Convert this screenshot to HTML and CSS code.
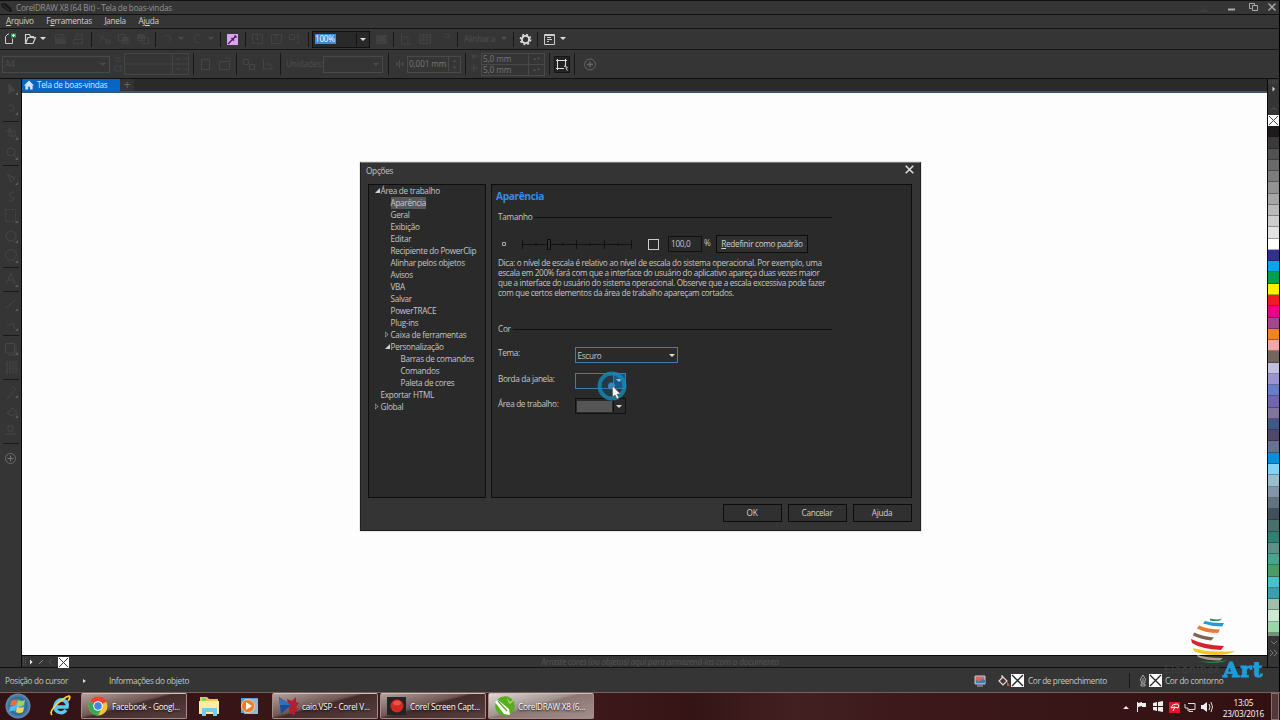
FILE: index.html
```html
<!DOCTYPE html>
<html lang="pt-BR">
<head>
<meta charset="utf-8">
<title>CorelDRAW X8</title>
<link rel="stylesheet" href="styles.css">
</head>
<body>
<div class="desktop">
<header class="titlebar">
  <svg class="icon" width="15" height="13" viewBox="0 0 15 13"><path d="M1 3l4-1 6 5 1 4-4-1-6-4z" fill="#151515"/><path d="M3 4l6 5" stroke="#3b3b3b"/></svg>
  <span class="app-title">CorelDRAW X8 (64 Bit) - Tela de boas-vindas</span>
  <svg class="window-buttons" width="80" height="13" viewBox="0 0 80 13" fill="none" stroke="#aaa"><path d="M0 10h9M5 6v4" stroke="#444"/><path d="M29 8.500h7" stroke-width="2"/><path d="M52.500 7.500h-2v-5h5v2M53.500 4.500h5v5h-5z"/><path d="M69.500 2.500l7 7m0-7l-7 7" stroke-width="1.400"/></svg>
</header>
<nav class="menubar"><span><u>A</u>rquivo</span><span>F<u>e</u>rramentas</span><span><u>J</u>anela</span><span>Aj<u>u</u>da</span></nav>
<div class="toolbar">
  <svg width="312" height="20" viewBox="0 0 312 20" fill="none">
    <path d="M9 5H8L5.500 7.500v7h7v-5" stroke="#ccc"/><path d="M11 4.500h5v4h-5z" fill="#2fa45c"/><path d="M13.500 5v3M12 6.500h3" stroke="#d0f5dc"/>
    <path d="M25.500 14.500v-9h4l1 2h3v2M25.500 14.500l2.500-6h7.500l-2.500 6z" stroke="#d2d2d2" stroke-width="1.200"/><path d="M40 8h6l-3 3z" fill="#ddd"/>
    <g stroke="#424242"><path d="M55.500 5.500h8l2 2v7h-10zM57 9h6v-3M58 14v-3h5v3M73.500 10.500h9v4h-9zM75 10l2-5h5v5M98 6l9 6m-8 1l5-7m2 5h4v3h-4zM118.500 5.500h7v6h-7zM122.500 8.500h7v6h-7zM137.500 5.500h7v6h-7zM141.500 8.500h7v6h-7zM163 8q5-4 7 0t-2 5M200 6q-6-1-6 4t5 3"/><path d="M252.500 5.500h10v9h-10zM257 4v7m-2-2l2 2 2-2M271.500 5.500h10v9h-10zM276 12V5m-2 2l2-2 2 2M289.500 5.500h5v5h-5zM294 8h5v6h-4M298 4v4"/></g>
    <path d="M178 8h6l-3 3zM208 8h6l-3 3z" fill="#4c4c4c"/><path d="M56 10h9v4h-9zM138 6h6v4h-6zM122 9h6v4h-6z" fill="#404040"/>
    <path d="M227 5h11v11h-11z" fill="#dba2f3"/><path d="M228 15l8-8" stroke="#432052" stroke-width="1.300"/><path d="M231.500 9l2.500 2.500M234.500 6.500l2 2" stroke="#432052" stroke-width="1.500"/>
    <path d="M91.500 3v15M155.500 3v15M220.500 3v15M245.500 3v15M308.500 3v15" stroke="#171717"/>
  </svg>
  <div class="zoom-box"><b>100%</b><i></i></div>
  <svg width="94" height="20" viewBox="370 0 94 20" fill="none" stroke="#424242"><path d="M376.500 6.500h10v8h-10zm0 0l10 8m0-8l-10 8M401.500 4v11h10M401 8h7v7M419.500 5.500h11v9h-11zM419 8h12M419 11h12M423 5v10M427 5v10M444 5h5v3h-5"/><path d="M378 7h7v6h-7z" fill="#424242"/><path d="M393.500 3v15M457.500 3v15" stroke="#171717"/></svg>
  <span class="align-label">Alinhar a</span>
  <svg width="75" height="20" viewBox="496 0 75 20" fill="none"><path d="M501 8h6l-3 3z" fill="#505050"/><path d="M513.500 3v15M537.500 3v15" stroke="#171717"/><circle cx="525.500" cy="10.500" r="3.600" stroke="#ddd" stroke-width="1.900"/><circle cx="525.500" cy="10.500" r="5.100" stroke="#ddd" stroke-width="1.500" stroke-dasharray="2 2"/><path d="M544.500 5.500h10v10h-10zM544 6.500h11M547 8.500h4M547 10.500h5M547 12.500h2" stroke="#ccc"/><path d="M560 8h6l-3 3z" fill="#ddd"/></svg>
</div>
<div class="propbar">
  <div class="dim-box paper"><span>A4</span><i></i></div>
  <svg class="fill-h" width="180" height="28" viewBox="110 0 180 28" fill="none" stroke="#454545"><path d="M115 8h6M115 11h6M115 16h6v5h-6zM124.500 3.500h64v21h-64zM124 14h64M172.500 4v20M175 9h5m3 0h5M175 19h5m3 0h5M201.500 9.500h8v10h-8zM219.500 11.500h10v8h-10zM225 8h5v3M243.500 9.500h5v5h-5zM249.500 14.500h5v5h-5zM263.500 9v10h10M266 14h5v5"/><path d="M193.500 3v22M236.500 3v22M280.500 3v22" stroke="#171717"/></svg>
  <span class="dim-label">Unidades:</span><div class="dim-box units"><i></i></div>
  <svg width="24" height="28" viewBox="383 0 24 28" fill="none"><path d="M388.500 3v22" stroke="#171717"/><path d="M399.500 10v8M396 14h8m-6-2l-2 2 2 2m4-4l2 2-2 2" stroke="#4c4c4c"/></svg>
  <div class="dim-box nudge"><span>0,001 mm</span><em>▴<br>▾</em></div>
  <svg width="20" height="28" viewBox="461 0 20 28" fill="none"><path d="M465.500 3v22" stroke="#171717"/><path d="M471 6h7m-5-2v5m-2 9h7m-4-4v8" stroke="#484848"/></svg>
  <div class="duplicate"><div><span>5,0 mm</span><em>▴ ▾</em></div><div><span>5,0 mm</span><em>▴ ▾</em></div></div>
  <svg width="60" height="28" viewBox="545 0 60 28" fill="none"><path d="M549.500 3v22M574.500 3v22" stroke="#171717"/><path d="M554.500 6.500h15v16h-15z" fill="#242424" stroke="#141414"/><path d="M556 10.500h11M556 18.500h8M557.500 9v11M565.500 9v7" stroke="#ddd"/><path d="M564 16l3.500 1.500-1.500 1 1.500 2" stroke="#ddd"/><circle cx="590" cy="14.500" r="5.500" stroke="#666"/><path d="M587 14.500h6m-3-3v6" stroke="#666" stroke-width="1.400"/></svg>
</div>
<div class="middle">
  <aside class="toolbox">
    <svg width="21" height="588" viewBox="0 79 21 588" fill="none" stroke="#464646">
      <path d="M9 84l6 7h-4l-2 3z" fill="#464646"/><path d="M8 106q5-3 6 2t-5 2M6 131h9v5M9 128v8h8M10 127l3 11"/><circle cx="11" cy="152" r="4"/><path d="M14 155l3 4M8 175l7 3-4 4zM8 173v3M14 192q-7 1-4 4t4 2q-1 5-5 2"/><path d="M5.500 209.500h10v12h-10z" stroke-dasharray="2 1"/><circle cx="11" cy="236" r="5"/><path d="M8 250h6l3 5-3 5H8l-3-5zM6 284l5-11 4 11M8 280h5M6 308l4-3 5-5M7 326l6-3 2 6M5.500 343.500h9V353h-9zM8 355h8v-9"/>
      <path d="M6 363h11m-11 3h11m-11 3h11m-11 3h11M7 361v13m3-13v13m3-13v13M16 361v13" stroke-dasharray="2 1"/><path d="M7 399l7-8M13 387l3 3M7 413l6-5 4 5-5 3zM5 434h11M8 426h5v5H8z"/><path d="M3 121.500h16M3 165.500h16M3 267.500h16M3 291.500h16M3 335.500h16M3 379.500h16M3 443.500h16" stroke="#181818"/>
      <g fill="#606060" stroke="none"><path d="M18 92v3h-3zM18 112v3h-3zM18 137v3h-3zM18 157v3h-3zM18 182v3h-3zM18 220v3h-3zM18 240v3h-3zM18 260v3h-3zM18 284v3h-3zM18 308v3h-3zM18 328v3h-3zM18 352v3h-3zM18 395v3h-3zM18 415v3h-3z"/></g>
      <circle cx="10.500" cy="458.500" r="5" stroke="#6b6b6b"/><path d="M7.500 458.500h6m-3-3v6" stroke="#777"/>
    </svg>
  </aside>
  <section class="workspace">
    <div class="tabs"><div class="tab"><svg width="10" height="10" viewBox="0 0 11 10"><path d="M0 5.500L5.500 0 11 5.500H9.500V10h-3V7h-2v3h-3V5.500z" fill="#d4e4f8"/></svg><span>Tela de boas-vindas</span></div><div class="add-tab">+</div></div>
    <main class="canvas"></main>
    <div class="doc-palette"><svg width="48" height="12" viewBox="0 0 48 12"><path d="M1.500 2v8M3.500 2v8" stroke="#555" stroke-dasharray="1 1"/><path d="M8 3.500l2.500 2.500L8 8.500z" fill="#eee"/><path d="M17 8l4-4" stroke="#888"/><path d="M30 3l-3 3 3 3" fill="none" stroke="#555"/><path d="M36 1h11v11H36z" fill="#fff"/><path d="M37 2l9 9m0-9l-9 9" stroke="#333"/></svg><em>Arraste cores (ou objetos) aqui para armazená-las com o documento</em></div>
  </section>
  <aside class="palette">
    <svg width="11" height="36" viewBox="0 0 11 36"><path d="M0 2h10M0 4h10" stroke="#555" stroke-dasharray="1 1"/><path d="M4.500 7.500L7 10l-2.500 2.500z" fill="#ddd"/><path d="M3 31l3-2 3 2" fill="none" stroke="#555"/></svg>
    <svg width="11" height="11" viewBox="0 0 11 11"><path d="M0 0h11v11H0z" fill="#fff"/><path d="M1 1l9 9m0-9l-9 9" stroke="#444"/></svg>
    <i style="background:#1d1b1c"></i><i style="background:#3a3a3a"></i><i style="background:#525252"></i><i style="background:#6a6a6a"></i><i style="background:#7c7c7c"></i><i style="background:#929292"></i><i style="background:#a6a6a6"></i><i style="background:#b9b9b9"></i><i style="background:#cccccc"></i><i style="background:#e2e2e2"></i><i style="background:#ffffff"></i><i style="background:#2e3192"></i><i style="background:#00a9ec"></i><i style="background:#00a14d"></i><i style="background:#fff200"></i><i style="background:#ed1c24"></i><i style="background:#ec008c"></i><i style="background:#a2488e"></i><i style="background:#f58220"></i><i style="background:#f3a6a7"></i><i style="background:#73665c"></i><i style="background:#c1c0e0"></i><i style="background:#9b94ce"></i><i style="background:#647fc5"></i><i style="background:#7165ae"></i><i style="background:#81759f"></i><i style="background:#3e5989"></i><i style="background:#514869"></i><i style="background:#657292"></i><i style="background:#0091dc"></i><i style="background:#80d4fa"></i><i style="background:#99bdcc"></i><i style="background:#8495a8"></i><i style="background:#607480"></i><i style="background:#40505d"></i><i style="background:#476f6c"></i><i style="background:#317f73"></i><i style="background:#5c918a"></i><i style="background:#48a58d"></i><i style="background:#4c9b67"></i><i style="background:#48c2cc"></i><i style="background:#379faf"></i><i style="background:#a0beaa"></i><i style="background:#c9e9d2"></i><i style="background:#99d5ab"></i>
    <svg class="palette-end" width="11" height="28" viewBox="0 0 11 28"><path d="M0 0h11v3H0z" fill="#71927d"/><path d="M3 8l3 3 3-3M2 17l3 3-3 3m4-6l3 3-3 3" fill="none" stroke="#777"/></svg>
  </aside>
</div>
<footer class="status">
  <span class="cursor-pos">Posição do cursor</span><i></i><span class="info">Informações do objeto</span>
  <svg class="monitor" width="12" height="12" viewBox="0 0 12 12"><path d="M1 1h10v8H1z" fill="#db665e" stroke="#b9d0e4"/><path d="M2 5l3 2 3-3 3 1v3H2z" fill="#387db6"/><path d="M3 11h6" stroke="#9fb8d2"/></svg>
  <svg class="fill-icon" width="27" height="14" viewBox="0 0 27 14"><path d="M1 7l4-4 4 4-4 4zM4 5V1" stroke="#ddd" fill="#483232" stroke-width="1.200"/><path d="M9 7l3 5H9z" fill="#bd5a4a"/><path d="M13 0h13v13H13z" fill="#fff"/><path d="M14 1l11 11m0-11L14 12" stroke="#252525" stroke-width="1.300"/></svg><span class="fill-label">Cor de preenchimento</span>
  <svg class="outline-icon" width="35" height="16" viewBox="0 0 35 16"><path d="M2.500 0v15" stroke="#171717"/><path d="M16 2l2.500 4-1 4h-3l-1-4zm-2 9h4v2h-4zM16 5v4" fill="none" stroke="#aaa"/><path d="M22 1h13v13H22z" fill="#fff"/><path d="M23 2l11 11m0-11L23 13" stroke="#252525" stroke-width="1.300"/></svg><span class="outline-label">Cor do contorno</span>
</footer>
<div class="taskbar">
  <svg class="start" width="26" height="26" viewBox="0 0 26 26"><defs><radialGradient id="orb"><stop offset="0" stop-color="#79cdec"/><stop offset=".65" stop-color="#276b9c"/><stop offset="1" stop-color="#718caa"/></radialGradient></defs><circle cx="13" cy="13" r="12.500" fill="url(#orb)"/><path d="M6 8q3-2 6-1l-1 5q-3-1-6 1z" fill="#f46b31"/><path d="M13 7q3 2 7 0l-1 5q-4 2-7 0z" fill="#9bd452"/><path d="M5 14q3-2 6-1l-1 5q-3-1-6 1z" fill="#54b8ed"/><path d="M12 14q3 2 7 0l-1 5q-4 2-7 0z" fill="#ffd550"/></svg>
  <svg class="ie" width="22" height="22" viewBox="0 0 22 22" fill="none"><path d="M17 15q-3 4-8 2-5-3-2-9 4-5 9-2 3 2 2 6H7" stroke="#5bcaf2" stroke-width="3.500"/><path d="M3 20q-3-3 4-10T20 1q2 1-1 5" stroke="#ffd149" stroke-width="1.700"/></svg>
  <div class="task chrome"><svg width="20" height="20" viewBox="0 0 20 20"><circle cx="10" cy="10" r="9.500" fill="#f2c62d"/><path d="M10 10L2 5Q5 0 10 .500q6 0 9 5z" fill="#e94335"/><path d="M10 10l-8-5Q-1 10 2 15t8 4.500l4-8z" fill="#38a853"/><circle cx="10" cy="10" r="4.800" fill="#fff"/><circle cx="10" cy="10" r="3.800" fill="#4384e9"/></svg><span>Facebook - Googl...</span></div>
  <svg class="explorer" width="23" height="21" viewBox="0 0 23 21"><path d="M2 1h7l2 2h9v15H2z" fill="#e8c565"/><path d="M1 5h20v13H1z" fill="#ffeaa2"/><path d="M4 2h4v3H4z" fill="#8fcf63"/><path d="M4 20v-8h15v8h-4v-4H8v4z" fill="#78cbe8"/></svg>
  <svg class="player" width="20" height="20" viewBox="0 0 20 20"><path d="M1 2h17v15H1z" fill="#5ca0ce"/><path d="M4 3h14v15H4z" fill="#8ebbd3"/><circle cx="8" cy="10" r="6.500" fill="#ee7b25" stroke="#f8c8a1"/><path d="M6 6l6 4-6 4z" fill="#fff"/></svg>
  <div class="task video"><svg width="22" height="22" viewBox="0 0 22 22"><path d="M9 4l5 2 4-4v5l3 1-3 4 2 2-3 2v4l-5-1z" fill="#b41f2d"/><path d="M1 2l12 8L3 19z" fill="#174d99"/><path d="M1 2l12 8H2z" fill="#3272ba"/></svg><span>caio.VSP - Corel V...</span></div>
  <div class="task capture"><svg width="20" height="20" viewBox="0 0 20 20"><path d="M0 1h19v18H0z" fill="#242424"/><circle cx="10" cy="10" r="6.500" fill="#d32923"/><ellipse cx="10" cy="7" rx="4" ry="2.500" fill="#e85348"/></svg><span>Corel Screen Capt...</span></div>
  <div class="task corel"><svg width="20" height="20" viewBox="0 0 20 20"><circle cx="10" cy="10" r="9.800" fill="#59ad20"/><path d="M0 6l3-2 11 9 1 6-6-1z" fill="#fff"/><path d="M3 5l9 10" stroke="#59ad20" stroke-width="1.300"/><path d="M12 2q1 5 3 6 3-2 4-5l-4 3z" fill="#a7d46b"/></svg><span>CorelDRAW X8 (6...</span></div>
  <svg class="tray" width="92" height="14" viewBox="0 0 92 14" fill="#eee"><path d="M0 9l3-3 3 3zM14 2h1v10h-1zM15 3l4-1v1h4v4h-4v-1l-4 1zM30 3l4-1v4h-4zm5-1l5-1v5h-5zM30 7h4v4l-4-1zm5 0h5v5l-5-1z"/><path d="M46 2h11v11H46z" fill="#dc1927"/><path d="M48 8q1-4 5-4t2 4q-4-2-7 0m4-1l-2 4" stroke="#fff" fill="none"/><path d="M65 3.500h7v6h-6v2h4M62 4v4h3v3" stroke="#ddd" fill="none"/><path d="M78 5h2l4-3v10l-4-3h-2z"/><path d="M86 4q2 3 0 6m2-8q3 5 0 10" stroke="#ddd" fill="none"/></svg>
  <div class="clock">13:05<br>23/03/2016</div><div class="show-desktop"></div>
</div>
<div class="watermark"><svg width="46" height="46" viewBox="0 0 46 46"><path d="M20 1.500q7 2 12 0l-2 2q-5 1-10 0z" fill="#239252"/><path d="M15 4q8 2.500 19 2l-2 3.500q-10 0-19-3z" fill="#1e9cda"/><path d="M9 8.500q9 4 21 4l-2 3.500q-12 0-21-4.500z" fill="#ec7a2f"/><path d="M4 15.500q9 4 20 5l-3 3q-10-1-18-5z" fill="#7a6555"/><path d="M1 22q12 6 33 7l-3 4q-20-1-29-7z" fill="#db202d"/><path d="M3 31q15 5 42 3-5 4-20 4-13 0-21-4z" fill="#f2c622"/><path d="M7 38q10 3 26 3l-3 2.500q-14 0-22-3.500z" fill="#aaa18d"/><path d="M10 44q10 2 28-1-7 3.500-15 3-8 0-13-2z" fill="#28804a"/></svg><div class="brand"><span>Eleonlber</span><b>Art</b></div></div>
<div class="dialog">
  <div class="dialog-title"><span>Opções</span><svg width="9" height="9" viewBox="0 0 9 9"><path d="M.7.7l7.600 7.600m0-7.600L.7 8.300" stroke="#ddd" stroke-width="1.600"/></svg></div>
  <div class="dialog-body">
    <ul class="tree">
      <li class="open"><span>Área de trabalho</span></li><li class="l1 selected"><span>Aparência</span></li><li class="l1"><span>Geral</span></li><li class="l1"><span>Exibição</span></li><li class="l1"><span>Editar</span></li><li class="l1"><span>Recipiente do PowerClip</span></li><li class="l1"><span>Alinhar pelos objetos</span></li><li class="l1"><span>Avisos</span></li><li class="l1"><span>VBA</span></li><li class="l1"><span>Salvar</span></li><li class="l1"><span>PowerTRACE</span></li><li class="l1"><span>Plug-ins</span></li><li class="l1 closed"><span>Caixa de ferramentas</span></li><li class="l1 open"><span>Personalização</span></li><li class="l2"><span>Barras de comandos</span></li><li class="l2"><span>Comandos</span></li><li class="l2"><span>Paleta de cores</span></li><li><span>Exportar HTML</span></li><li class="closed"><span>Global</span></li>
    </ul>
    <section class="panel">
      <h2>Aparência</h2>
      <div class="section-head">Tamanho</div>
      <div class="scale-row">
        <svg width="150" height="18" viewBox="0 0 150 18" fill="none"><path d="M4.500 7.500h3v3h-3z" stroke="#aaa"/><path d="M24 9.500h110M24.500 5v9M51.500 5v9M78.500 5v9M106.500 5v9M133.500 5v9M38 8v3M65 8v3M92 8v3M120 8v3" stroke="#111"/><path d="M49.500 4.500h3v10h-3z" fill="#303030" stroke="#0a0a0a"/></svg>
        <i class="checkbox"></i><div class="number">100,0</div><span class="percent">%</span><button class="button reset"><span><u>R</u>edefinir como padrão</span></button>
      </div>
      <p>Dica: o nível de escala é relativo ao nível de escala do sistema operacional. Por exemplo, uma<br>escala em 200% fará com que a interface do usuário do aplicativo apareça duas vezes maior<br>que a interface do usuário do sistema operacional. Observe que a escala excessiva pode fazer<br>com que certos elementos da área de trabalho apareçam cortados.</p>
      <div class="section-head color-head">Cor</div>
      <div class="field"><label>Tema:</label><div class="select theme"><span>Escuro</span><i></i></div></div>
      <div class="field"><label>Borda da janela:</label><div class="select border-color"><i></i></div></div>
      <div class="field"><label>Área de trabalho:</label><div class="select area-color"><b></b><i></i></div></div>
    </section>
  </div>
  <div class="actions"><button class="button">OK</button><button class="button">Cancelar</button><button class="button">Ajuda</button></div>
</div>
<svg class="pointer" width="32" height="34" viewBox="0 0 32 34"><circle cx="15" cy="15" r="12.500" fill="#176393" fill-opacity=".25" stroke="#158bb8" stroke-width="4" stroke-opacity=".8"/><circle cx="14.500" cy="15" r="3.500" fill="#3a86bc"/><path d="M15.500 15v11l2.500-2 2 4 2-1-2-4h3.500z" fill="#fff" stroke="#444" stroke-width=".5"/></svg>
</div>
</body>
</html>
```

FILE: styles.css
```css
* { box-sizing: border-box; }
body { margin: 0; font: 8.200px/12px "Open Sans", "Noto Sans", sans-serif; letter-spacing: -.29px; color: #c6c6c6; }
svg { display: block; flex: none; }
button { font: inherit; color: inherit; letter-spacing: inherit; }
.desktop { position: relative; width: 1280px; height: 720px; overflow: hidden; display: flex; flex-direction: column; background: #353535; white-space: nowrap; }
.titlebar, .menubar, .toolbar, .propbar, .status { display: flex; align-items: center; flex: none; border-right: 1px solid #000; }
.titlebar { height: 15px; border-top: 1px solid #111; border-bottom: 1px solid #111; color: #929292; }
.app-title { margin-left: 1px; margin-top: 0; letter-spacing: -.24px; }
.window-buttons { margin-left: auto; margin-right: 0; }
.menubar { height: 14px; border-bottom: 1px solid #151515; padding-left: 6px; gap: 12.700px; color: #d0d0d0; }
.menubar span { margin-top: -1px; }
.menubar u, .reset u { text-underline-offset: 1px; }
.toolbar { height: 21px; border-bottom: 1px solid #151515; }
.zoom-box { width: 58px; height: 17px; padding: 1px; border: 1px solid #111; background: #292929; display: flex; align-items: center; }
.zoom-box b { height: 10px; line-height: 10px; width: 21px; margin-left: 1px; background: #3d8cd8; color: #fff; font-weight: 400; }
.zoom-box i, .select i, .dim-box > i { margin-left: auto; align-self: stretch; width: 12px; display: flex; align-items: center; justify-content: center; }
.zoom-box i { border-left: 1px solid #111; }
.zoom-box i::after, .select i::after, .dim-box > i::after { content: ""; border: 3px solid transparent; border-top-color: #ddd; border-bottom: 0; }
.align-label { width: 32px; color: #505050; }
.propbar { height: 29px; border-bottom: 1px solid #111; color: #505050; }
.dim-box { display: flex; align-items: center; height: 17px; border: 1px solid #494949; }
.dim-box > i::after { border-top-color: #4d4d4d; }
.paper { width: 108px; margin-left: 2px; padding-left: 2px; }
.fill-h { margin-right: -4px; }
.dim-label { width: 37px; letter-spacing: -.1px; }
.units { width: 60px; }
.nudge { width: 54px; padding-left: 1px; color: #777; letter-spacing: -.1px; }
.nudge em { margin-left: auto; width: 12px; border-left: 1px solid #494949; text-align: center; font: 5px/7px "DejaVu Sans"; color: #555; }
.duplicate { width: 64px; border: 1px solid #494949; color: #777; letter-spacing: -.1px; }
.duplicate div { height: 10px; line-height: 10px; display: flex; padding-left: 1px; }
.duplicate div + div { height: 11px; border-top: 1px solid #494949; }
.duplicate em { margin-left: auto; width: 16px; border-left: 1px solid #494949; font: 5px/9px "DejaVu Sans"; text-align: center; color: #555; }
.middle { height: 589px; display: flex; flex: none; }
.toolbox { width: 22px; border-right: 1px solid #0b0b0b; border-bottom: 1px solid #111; }
.workspace { width: 1245px; display: flex; flex-direction: column; }
.tabs { height: 14px; display: flex; border-bottom: 2px solid #40546a; background: #2a2a2a; }
.tab { width: 98px; height: 12px; padding-left: 2px; gap: 3px; background: #0665c7; display: flex; align-items: center; color: #d9e9ff; letter-spacing: -.25px; }
.add-tab { width: 14px; height: 12px; background: #343434; text-align: center; font: 12px/12px "Open Sans"; color: #666; }
.canvas { height: 562px; background: #fdfdfd; }
.doc-palette { height: 13px; border-top: 1px solid #090909; border-bottom: 1px solid #111; display: flex; align-items: center; color: #555; }
.doc-palette em { margin: 0 auto; padding-right: 17px; letter-spacing: -.17px; }
.palette { width: 13px; border-left: 1px solid #080808; border-right: 1px solid #000; border-bottom: 1px solid #111; }
.palette i { display: block; height: 11.280px; border-bottom: 1px solid rgba(20, 20, 20, .35); }
.status { height: 24px; padding-left: 5px; padding-top: 1px; color: #c5c5c5; }
.cursor-pos { width: 78px; }
.status i { border: 2.500px solid transparent; border-left: 3px solid #ddd; border-right: 0; }
.info { margin-left: 23px; width: 865px; letter-spacing: -.3px; }
.monitor { margin-right: 12px; }
.fill-icon { margin-right: 3px; }
.fill-label { width: 99px; letter-spacing: -.35px; }
.outline-icon { margin-right: 3px; }
.taskbar { height: 28px; border-top: 1px solid #78605c; background: linear-gradient(90deg, #321315, #3f191b 45%, #351416 54%, #422022 62%, #3d191b 70%, #321012); display: flex; align-items: flex-start; color: #fff; position: relative; }
.start { margin-left: 5px; }
.ie { margin-left: 18px; margin-top: 2px; }
.task { width: 106px; height: 26px; display: flex; align-items: center; gap: 4px; padding-left: 6px; border: 1px solid #a78b86; border-top-color: #d0bebb; border-radius: 2px; background: linear-gradient(165deg, #b3a19e, #705753 43%, #442c2c 48%, #57403e); text-shadow: 0 1px 2px #000; }
.task span { padding-top: 1px; letter-spacing: -.22px; }
.chrome { margin-left: 10px; }
.explorer { margin: 3px 0 0 11px; }
.player { margin: 3px 0 0 19px; }
.video { margin-left: 12px; padding-left: 5px; }
.video span { margin-left: -2px; }
.capture, .corel { margin-left: 2px; }
.corel { background: linear-gradient(165deg, #e0d9d5, #a09390 43%, #8c7673 48%, #a1908e); }
.corel span, .capture span { margin-left: -1px; }
.tray { margin: 7px 0 0 529px; }
.clock { position: absolute; right: 16px; top: 4px; line-height: 11px; text-align: center; letter-spacing: -.23px; }
.show-desktop { position: absolute; right: 1px; top: 0; width: 8px; height: 27px; border: 1px solid #837272; background: #53383a; }
.watermark { position: absolute; left: 1190px; top: 617px; }
.brand { display: flex; align-items: flex-start; margin-left: -26px; margin-top: -4px; height: 22px; }
.brand span { width: 59px; margin-top: 4px; font: 11px/11px "Open Sans"; color: #414141; letter-spacing: .8px; }
.brand b { font: 700 21px/22px "DejaVu Serif", serif; color: #1a9edb; letter-spacing: 1.200px; -webkit-text-stroke: 1px #1a9edb; }
.dialog { position: absolute; left: 360px; top: 162px; width: 560.500px; height: 369px; background: #343434; border: 1px solid #202020; border-top-color: #777; box-shadow: 0 0 1px #777; }
.dialog-title { height: 21px; padding: 2px 6px 0 5px; display: flex; justify-content: space-between; letter-spacing: -.25px; }
.dialog-body { display: flex; gap: 5px; padding-left: 7px; }
.tree, .panel { height: 314px; border: 1px solid #0e0e0e; background: #2a2a2a; }
.tree { list-style: none; margin: 0; width: 118px; padding: 0; }
.tree li { height: 12px; padding-left: 11.500px; display: flex; align-items: flex-start; }
.tree .l1 { padding-left: 21.500px; }
.tree .l2 { padding-left: 31.500px; }
.tree li span { line-height: 11px; }
.tree .selected span { background: #585858; height: 12px; }
.open::before { content: ""; width: 0; border-left: 5px solid transparent; border-bottom: 5px solid #d0d0d0; margin: 3px 1px 0 -6px; }
.closed::before { content: ""; width: 4px; height: 7px; margin: 2px 2px 0 -6px; background: #aaa; clip-path: polygon(0 0, 100% 50%, 0 100%, 0 0, 25% 22%, 25% 78%, 75% 50%, 25% 22%); }
.panel { width: 421px; padding: 5px 6px 0; }
.panel h2 { font-size: 10.200px; line-height: 13px; font-weight: 700; color: #378be6; margin: 0 0 8px -2px; letter-spacing: -.38px; }
.section-head { display: flex; align-items: center; width: 334px; height: 12px; gap: 2px; letter-spacing: -.25px; }
.section-head::after { content: ""; flex: 1; height: 1px; background: #111; }
.scale-row { height: 20px; margin-top: 11px; display: flex; align-items: center; }
.checkbox { width: 11px; height: 11px; border: 1px solid #ccc; }
.number { width: 34px; height: 16px; margin-left: 9px; padding-left: 2px; border: 1px solid #111; line-height: 14px; }
.percent { width: 14px; padding-left: 2px; margin-top: -3px; }
.button { height: 18px; width: 59px; padding: 0; border: 1px solid #0c0c0c; background: #303030; color: #d0d0d0; display: flex; align-items: center; justify-content: center; }
.reset { width: 92px; }
.panel p { margin: 4px 0 25px; line-height: 10px; letter-spacing: -.325px; }
.field { height: 25.500px; display: flex; align-items: flex-start; }
.color-head { margin-bottom: 12px; }
.field label { width: 76.500px; letter-spacing: -.33px; }
.select { height: 16px; width: 103px; border: 1px solid #477aaa; display: flex; align-items: center; padding-left: 2px; }
.select span { margin-top: 1px; }
.theme i { width: 9px; }
.border-color { width: 51px; }
.border-color i { background: #175487; border-left: 1px solid #477aaa; }
.area-color { width: 51px; padding: 1px 0 1px 1px; border-color: #111; }
.area-color b { width: 35px; height: 11px; background: #555; }
.area-color i { border-left: 1px solid #111; }
.actions { display: flex; gap: 6px; justify-content: flex-end; padding-right: 8px; margin-top: 6px; }
.pointer { position: absolute; left: 597px; top: 371px; }
```
